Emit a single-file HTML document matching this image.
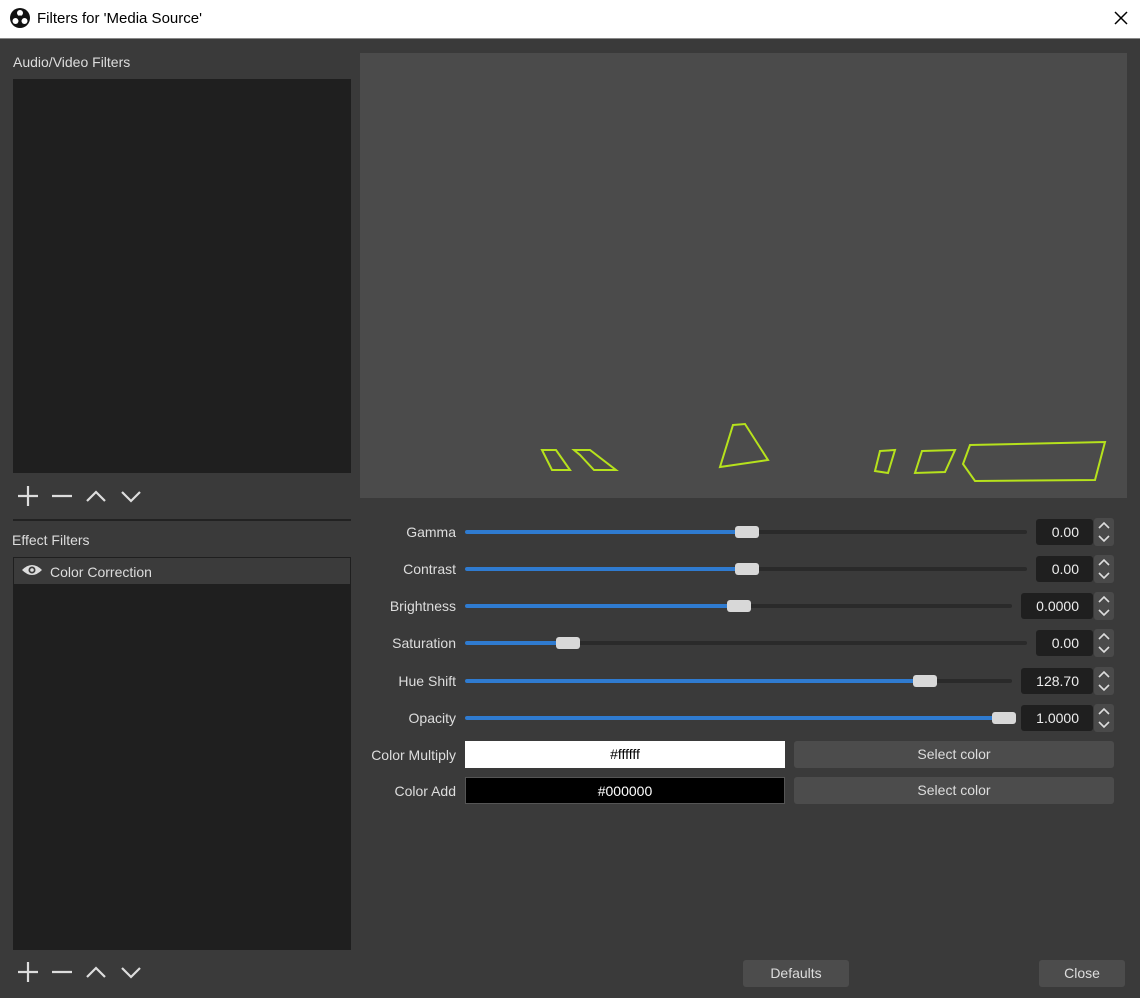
<html><head><style>
body{margin:0;width:1140px;height:998px;background:#3a3a3a;font-family:"Liberation Sans",sans-serif;font-size:14px;color:#ddd;position:relative;overflow:hidden}
.a{position:absolute}
.title{left:0;top:0;width:1140px;height:38px;background:#fff;color:#000;border-bottom:1px solid #888}
.list{background:#1f1f1f}
.lbl{text-align:right;width:150px;left:306px;font-size:14px}
.track{height:4px;background:#2a2a2a;border-radius:2px}
.fill{height:4px;background:#2f7bd0;border-radius:2px}
.thumb{width:24px;height:12px;background:#d8d8d8;border-radius:3px}
.spin{background:#1f1f1f;height:26px;border-radius:3px;text-align:right;line-height:26px;padding-right:14px;box-sizing:border-box;color:#eee}
.arr{width:20px;height:28px;background:#4a4a4a;border-radius:3px}
.btn{background:#4c4c4c;border-radius:3px;text-align:center;line-height:27px;color:#ddd}
</style></head><body>
<div class="a title">
<svg class="a" style="left:10px;top:8px" width="20" height="20" viewBox="0 0 20 20"><circle cx="10" cy="10" r="10" fill="#111"/><circle cx="10" cy="5" r="3" fill="#fff"/><circle cx="5.5" cy="13" r="3" fill="#fff"/><circle cx="14.5" cy="13" r="3" fill="#fff"/><circle cx="10" cy="10" r="2.5" fill="#111"/></svg>
<div class="a" style="left:37px;top:10px;font-size:15px">Filters for 'Media Source'</div>
<svg class="a" style="left:1114px;top:11px" width="14" height="14"><path d="M1 1L13 13M13 1L1 13" stroke="#000" stroke-width="1.5"/></svg>
</div>
<div class="a" style="left:13px;top:54px">Audio/Video Filters</div>
<div class="a list" style="left:13px;top:79px;width:338px;height:394px"></div>
<svg class="a" style="left:14px;top:484px" width="132" height="24" fill="none" stroke="#ddd" stroke-width="2.2"><path d="M4 12H24M14 2V22M38 12H58M73 17L82 8L91 17M108 8L117 17L126 8"/></svg>
<div class="a" style="left:13px;top:519px;width:338px;height:2px;background:#222"></div>
<div class="a" style="left:12px;top:532px">Effect Filters</div>
<div class="a list" style="left:13px;top:557px;width:338px;height:393px"></div>
<div class="a" style="left:14px;top:558px;width:336px;height:26px;background:#3b3b3b"></div>
<svg class="a" style="left:21px;top:563px" width="22" height="14"><path d="M1 7Q11 -3 21 7Q11 17 1 7Z" fill="#ddd"/><circle cx="11" cy="7" r="3.5" fill="#3b3b3b"/><circle cx="11" cy="7" r="1.8" fill="#ddd"/></svg>
<div class="a" style="left:50px;top:564px">Color Correction</div>
<svg class="a" style="left:14px;top:960px" width="132" height="24" fill="none" stroke="#ddd" stroke-width="2.2"><path d="M4 12H24M14 2V22M38 12H58M73 17L82 8L91 17M108 8L117 17L126 8"/></svg>
<div class="a" style="left:360px;top:53px;width:767px;height:445px;background:#4b4b4b"></div>
<svg class="a" style="left:530px;top:415px" width="590" height="75" fill="none" stroke="#b6e21c" stroke-width="2"><path d="M12 35L26 35L40 55L22 55ZM44 35L60 35L86 55L64 55L50 40Z"/><path d="M203 10L215 9L238 45L190 52Z"/><path d="M350 36L365 35L358 58L345 56ZM392 36L425 35L415 57L385 58ZM440 30L575 27L565 65L445 66L433 49Z"/></svg>
<div id="s"></div>
<div class="a" style="left:306px;top:747px;width:150px;text-align:right">Color Multiply</div>
<div class="a" style="left:465px;top:741px;width:320px;height:27px;background:#fff;color:#000;text-align:center;line-height:27px">#ffffff</div>
<div class="a btn" style="left:794px;top:741px;width:320px">Select color</div>
<div class="a" style="left:306px;top:783px;width:150px;text-align:right">Color Add</div>
<div class="a" style="left:465px;top:777px;width:320px;height:27px;background:#000;color:#fff;text-align:center;line-height:27px;box-sizing:border-box;border:1px solid #555">#000000</div>
<div class="a btn" style="left:794px;top:777px;width:320px">Select color</div>
<div class="a btn" style="left:743px;top:960px;width:106px">Defaults</div>
<div class="a btn" style="left:1039px;top:960px;width:86px">Close</div>
<script>
var rows=[["Gamma",532,747,1027,"0.00"],["Contrast",569,747,1027,"0.00"],["Brightness",606,739,1012,"0.0000"],["Saturation",643,568,1027,"0.00"],["Hue Shift",681,925,1012,"128.70"],["Opacity",718,1004,1012,"1.0000"]];
var h="";rows.forEach(function(r){var y=r[1],t=r[2],e=r[3],sl=e+9;
h+='<div class="a lbl" style="top:'+(y-8)+'px">'+r[0]+'</div>';
h+='<div class="a track" style="left:465px;top:'+(y-2)+'px;width:'+(e-465)+'px"></div>';
h+='<div class="a fill" style="left:465px;top:'+(y-2)+'px;width:'+(t-465)+'px"></div>';
h+='<div class="a thumb" style="left:'+(t-12)+'px;top:'+(y-6)+'px"></div>';
h+='<div class="a spin" style="left:'+sl+'px;top:'+(y-13)+'px;width:'+(1093-sl)+'px">'+r[4]+'</div>';
h+='<div class="a arr" style="left:1094px;top:'+(y-14)+'px"></div><svg class="a" style="left:1096px;top:'+(y-12)+'px" width="16" height="24" fill="none" stroke="#ddd" stroke-width="1.6"><path d="M3 8L8 3L13 8M3 16L8 21L13 16"/></svg>';});
document.getElementById("s").innerHTML=h;
</script>
</body></html>
